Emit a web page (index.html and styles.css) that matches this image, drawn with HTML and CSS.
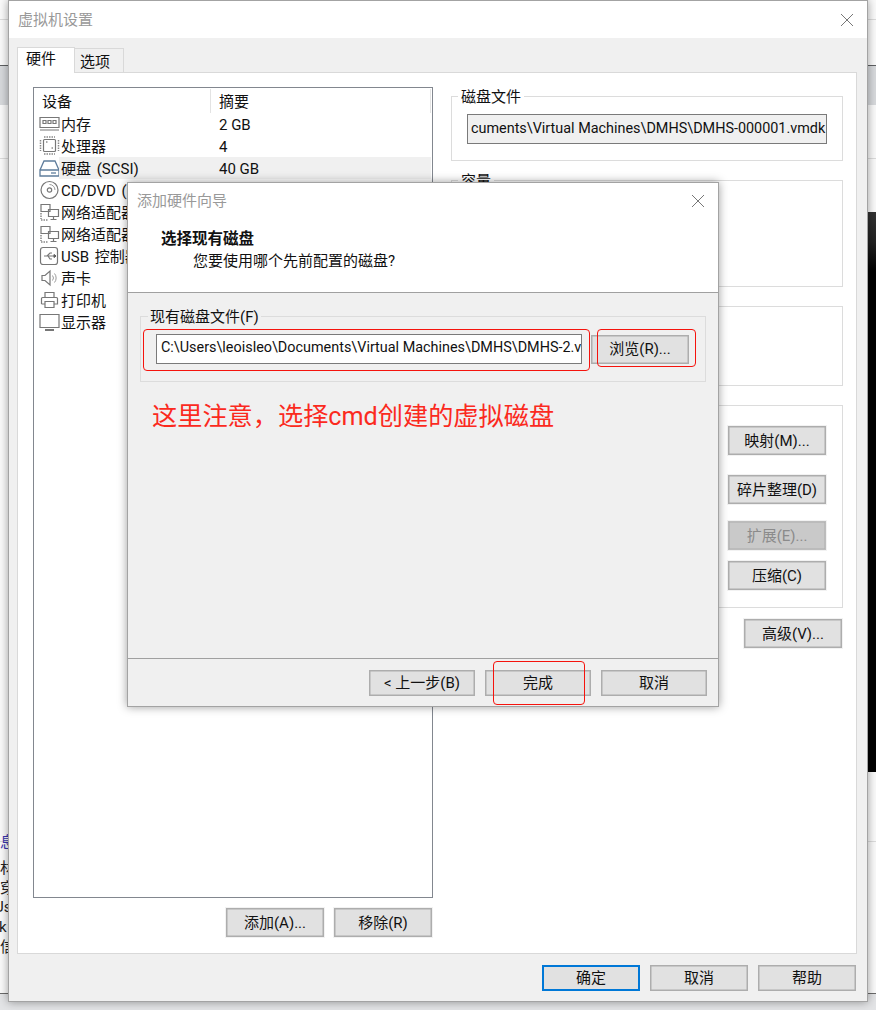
FILE: index.html
```html
<!DOCTYPE html>
<html lang="zh-CN">
<head>
<meta charset="utf-8">
<title>虚拟机设置</title>
<link rel="stylesheet" href="styles.css">
</head>
<body>
<div class="desktop">
  <div class="backdrop">
    <div class="band band-a"></div>
    <div class="band band-dark"></div>
    <div class="band band-gray"></div>
    <div class="band band-b"></div>
    <div class="band band-c"></div>
    <div class="band band-d"></div>
    <div class="band band-floor"></div>
  </div>
  <div class="side-dark"></div>
  <div class="side-line"></div>
  <div class="side-notes">
    <span class="note note-link">息</span>
    <span class="note">材</span>
    <span class="note">穿</span>
    <span class="note note-us">Us</span>
    <span class="note note-us">rk</span>
    <span class="note">信</span>
  </div>

  <section class="window">
    <header class="titlebar">
      <span class="title">虚拟机设置</span>
      <svg class="close" viewBox="0 0 14 14"><path d="M1 1l12 12M13 1L1 13"/></svg>
    </header>
    <div class="window-body">
      <nav class="tabs">
        <span class="tab tab-active">硬件</span>
        <span class="tab">选项</span>
      </nav>
      <div class="panel">
        <div class="col-left">
          <div class="list">
            <div class="list-head">
              <span class="head-cell">设备</span>
              <span class="head-cell head-last">摘要</span>
            </div>
            <div class="row">
              <svg class="ico" viewBox="0 0 21 20"><path class="s" d="M1 3.500h19v10H1zM1 16h19"/><path class="s" d="M4 6.500h3v3H4zM9 6.500h3v3H9zM14 6.500h3v3h-3z"/></svg>
              <span class="name">内存</span><span class="val">2 GB</span>
            </div>
            <div class="row">
              <svg class="ico" viewBox="0 0 21 20"><rect class="s" x="4.500" y="3.500" width="12" height="12" rx="1"/><path class="dot" d="M5 1h11M5 18h11M1.500 4v11M19.500 4v11"/><path class="k" d="M7 6h1.500M12.500 12h1.500"/></svg>
              <span class="name">处理器</span><span class="val">4</span>
            </div>
            <div class="row row-on">
              <svg class="ico" viewBox="0 0 21 20"><path class="b" d="M1 12L5 3h11l4 9M1 12h19v6H1z"/><path class="b" d="M12 15h5"/></svg>
              <span class="name">硬盘 (SCSI)</span><span class="val">40 GB</span>
            </div>
            <div class="row">
              <svg class="ico" viewBox="0 0 21 20"><circle class="s" cx="10.500" cy="10" r="8.500"/><circle class="s" cx="10.500" cy="10" r="2.200"/><path class="l" d="M10.500 4.500A5.500 5.500 0 0 1 16 10"/></svg>
              <span class="name">CD/DVD (IDE)</span>
            </div>
            <div class="row">
              <svg class="ico" viewBox="0 0 21 20"><path class="s" d="M2 2.500h9v7H2zM9.500 7.500h10v7h-10zM14.500 14.500v3M11.500 17.500h6"/><path class="dot" d="M2 18h7M2 11v6"/></svg>
              <span class="name">网络适配器</span>
            </div>
            <div class="row">
              <svg class="ico" viewBox="0 0 21 20"><path class="s" d="M2 2.500h9v7H2zM9.500 7.500h10v7h-10zM14.500 14.500v3M11.500 17.500h6"/><path class="dot" d="M2 18h7M2 11v6"/></svg>
              <span class="name">网络适配器</span>
            </div>
            <div class="row">
              <svg class="ico" viewBox="0 0 21 20"><rect class="s" x="1.500" y="1.500" width="17" height="17" rx="2.500"/><path class="s" d="M5 10h10M8 10l3-3h2M9 10l2 3h2"/><path class="k" d="M15 8.500l2 1.500-2 1.500z"/></svg>
              <span class="name">USB 控制器</span>
            </div>
            <div class="row">
              <svg class="ico" viewBox="0 0 21 20"><path class="s" d="M3 7.500h3l5-4.500v14l-5-4.500H3z"/><path class="l" d="M13.500 7.500a4 4 0 0 1 0 5M15.500 5.500a7 7 0 0 1 0 9"/></svg>
              <span class="name">声卡</span>
            </div>
            <div class="row">
              <svg class="ico" viewBox="0 0 21 20"><path class="s" d="M6 7.500v-5h9v5M2.500 14V8.500a1 1 0 0 1 1-1h14a1 1 0 0 1 1 1V14H15M6 14H2.500M6 11.500h9v6H6z"/></svg>
              <span class="name">打印机</span>
            </div>
            <div class="row">
              <svg class="ico" viewBox="0 0 21 20"><path class="s" d="M1 2.500h19v13H1z"/><path class="t" d="M6 18h9"/></svg>
              <span class="name">显示器</span>
            </div>
          </div>
          <div class="btn-row">
            <button class="btn btn-tall">添加(A)...</button>
            <button class="btn btn-tall">移除(R)</button>
          </div>
        </div>
        <div class="col-right">
          <div class="group group-file">
            <span class="legend">磁盘文件</span>
            <div class="field field-ro">cuments\Virtual Machines\DMHS\DMHS-000001.vmdk</div>
          </div>
          <div class="group group-size">
            <span class="legend">容量</span>
          </div>
          <div class="group group-mode"></div>
          <div class="group group-tools">
            <button class="btn btn-tall">映射(M)...</button>
            <button class="btn btn-tall gap-20">碎片整理(D)</button>
            <button class="btn btn-tall btn-off gap-17" disabled>扩展(E)...</button>
            <button class="btn btn-tall gap-11">压缩(C)</button>
          </div>
          <button class="btn btn-tall btn-adv">高级(V)...</button>
        </div>
      </div>
      <footer class="window-foot">
        <button class="btn btn-main">确定</button>
        <button class="btn">取消</button>
        <button class="btn">帮助</button>
      </footer>
    </div>
  </section>

  <section class="dialog">
    <header class="dialog-head">
      <div class="titlebar dialog-bar">
        <span class="title">添加硬件向导</span>
        <svg class="close" viewBox="0 0 14 14"><path d="M1 1l12 12M13 1L1 13"/></svg>
      </div>
      <h2 class="heading">选择现有磁盘</h2>
      <p class="sub">您要使用哪个先前配置的磁盘?</p>
    </header>
    <div class="dialog-body">
      <div class="group group-pick">
        <span class="legend legend-gray">现有磁盘文件(F)</span>
        <div class="pick-row">
          <div class="field field-path">C:\Users\leoisleo\Documents\Virtual Machines\DMHS\DMHS-2.vmdk</div>
          <button class="btn btn-browse">浏览(R)...</button>
        </div>
      </div>
      <p class="note-red">这里注意，选择cmd创建的虚拟磁盘</p>
    </div>
    <footer class="dialog-foot">
      <button class="btn btn-wide">&lt; 上一步(B)</button>
      <button class="btn btn-wide">完成</button>
      <button class="btn btn-wide">取消</button>
    </footer>
  </section>

  <div class="mark mark-path"></div>
  <div class="mark mark-browse"></div>
  <div class="mark mark-finish"></div>
</div>
</body>
</html>
```
FILE: styles.css
```css
* { box-sizing: border-box; }
html, body { margin: 0; padding: 0; }
body {
  font-family: Roboto, "Noto Sans CJK SC", sans-serif;
  font-size: 15px;
  color: #111;
}
.desktop {
  position: relative;
  width: 876px;
  height: 1010px;
  overflow: hidden;
  background: #fff;
}

/* what shows around the window */
.backdrop { position: absolute; inset: 0; display: flex; flex-direction: column; }
.band { border-bottom: 1px solid #dcdcdc; background: #fbfbfb; }
.band-a { height: 20px; }
.band-dark { height: 46px; border-bottom: 1px solid #5e6062; }
.band-gray { height: 39px; background: #d8dadd; border-bottom: 0; }
.band-b { height: 54px; }
.band-c { height: 683px; }
.band-d { height: 152px; border-bottom: 1px solid #6a6a6a; }
.band-floor { flex: 1; background: #e3e4e6; border-bottom: 0; }
.side-dark {
  position: absolute; right: 0; top: 212px; width: 9px; height: 560px;
  background: linear-gradient(#333 0, #222 30px, #000 60px);
}
.side-line { position: absolute; right: 0; top: 841px; width: 9px; height: 1px; background: #ddd; }
.side-notes {
  position: absolute; left: 0; top: 832px; width: 9px; overflow: hidden;
  display: flex; flex-direction: column;
  line-height: 20px; font-size: 15px; white-space: nowrap;
}
.note { display: block; height: 19.800px; color: #222; }
.note-link { color: #3a35b0; margin-bottom: 6px; }
.note-us { margin-left: -6px; }

/* shared window parts */
.window, .dialog {
  position: absolute;
  border: 1px solid #a3a3a3;
  background: #f0f0f0;
  box-shadow: 0 0 9px rgba(0, 0, 0, .38);
  display: flex;
  flex-direction: column;
}
.window { left: 8px; top: 0; width: 860px; height: 1002px; }
.dialog { left: 127px; top: 182px; width: 592px; height: 525px; }
.titlebar {
  height: 37px;
  background: #fff;
  display: flex;
  align-items: center;
  justify-content: space-between;
  padding: 0 13px 0 9px;
}
.title { color: #999; font-size: 15px; line-height: 20px; }
.close { width: 14px; height: 14px; fill: none; stroke: #777; stroke-width: 1; }

.window-body { flex: 1; padding: 9px 10px 0 8px; display: flex; flex-direction: column; }
.tabs { display: flex; height: 25px; align-items: flex-end; }
.tab {
  width: 50px; height: 24px;
  margin-left: -1px;
  border: 1px solid #d9d9d9;
  border-bottom: 0;
  background: #f0f0f0;
  padding-left: 5px;
  line-height: 26px;
}
.tab-active {
  position: relative;
  width: 58px; height: 26px;
  margin: 0 0 -1px;
  background: #fff;
  padding-left: 8px;
  line-height: 22px;
}
.panel {
  height: 882px;
  background: #fff;
  border: 1px solid #d9d9d9;
  padding: 14px 13px 0 15px;
  display: grid;
  grid-template-columns: 400px 392px;
  column-gap: 18px;
}
.col-left { display: flex; flex-direction: column; }
.col-right { display: flex; flex-direction: column; align-items: stretch; padding-top: 9px; }

.list { height: 811px; border: 1px solid #82878f; background: #fff; }
.list-head { display: grid; grid-template-columns: 177px 1fr; height: 25px; }
.head-cell { padding-left: 8px; line-height: 26px; height: 24px; border-right: 1px solid #e3e3e3; margin-top: 1px; }
.head-last { margin-right: 1px; }
.row { display: grid; grid-template-columns: 25px 160px 1fr; height: 22px; align-items: stretch; line-height: 24px; margin-right: 1px; }
.ico { width: 21px; height: 20px; margin: 1px 0 0 5px; fill: none; }
.s { stroke: #777; stroke-width: 1.200; fill: none; }
.t { stroke: #777; stroke-width: 2; fill: none; }
.b { stroke: #5f7d9c; stroke-width: 1.300; fill: none; }
.l { stroke: #9a9a9a; stroke-width: 1; fill: none; }
.k { stroke: #555; stroke-width: 1; fill: #777; }
.dot { stroke: #888; stroke-width: 1.500; stroke-dasharray: 1.500 1; fill: none; }
.name { padding-left: 2px; white-space: nowrap; word-spacing: 2px; height: 22px; }
.val { padding-left: 0; height: 22px; }
.row-on .name, .row-on .val { background: #f0f0f0; }

.btn {
  width: 98px; height: 26px; padding: 0;
  font: inherit; color: #111;
  background: #e1e1e1;
  border: 1px solid #adadad;
  box-shadow: inset 0 0 0 .5px #adadad;
  line-height: 22px;
  flex: none;
}
.btn-tall { height: 29px; box-shadow: inset 0 0 0 .5px #adadad, 0 0 0 1px #f2f2f2; }
.btn-main { border: 2px solid #0078d7; box-shadow: none; }
.btn-off { background: #c9c9c9; color: #8b8b8b; border-color: #bcbcbc; }
.btn-wide { width: 106px; }
.btn-row { display: flex; justify-content: flex-end; gap: 10px; margin: 10px 1px 0 0; }
.btn-adv { align-self: flex-end; margin: 11px 1px 0 0; }
.window-foot { display: flex; justify-content: flex-end; gap: 10px; padding: 11px 1px 0 0; }

.group { border: 1px solid #dcdcdc; display: flex; flex-direction: column; flex: none; }
.legend {
  align-self: flex-start;
  margin: -10px 0 0 6px;
  padding: 0 3px;
  line-height: 20px;
  background: #fff;
}
.legend-gray { background: #f0f0f0; margin: -10px 0 0 7px; padding: 0 2px; }
.group-file { height: 65px; }
.group-size { height: 107px; margin-top: 19px; }
.group-mode { height: 80px; margin-top: 19px; }
.group-tools { height: 203px; margin-top: 19px; padding: 20px 16px 0 0; align-items: flex-end; }
.gap-20 { margin-top: 20px; }
.gap-17 { margin-top: 17px; }
.gap-11 { margin-top: 11px; }

.field {
  height: 30px; overflow: hidden; white-space: nowrap;
  border: 1px solid #7a7a7a; background: #fff;
  font-size: 14.400px;
  line-height: 26px; padding-left: 3px;
}
.field-ro { margin: 7px 0 0 15px; background: #f0f0f0; width: 360px; line-height: 27px; }
.field-path { width: 426px; padding-left: 4px; }

.dialog-head { height: 110px; background: #fff; border-bottom: 1px solid #a0a0a0; flex: none; }
.dialog-bar { height: 36px; }
.heading { margin: 9px 0 0 33px; font-size: 15.500px; font-weight: 700; line-height: 22px; }
.sub { margin: 0 0 0 65px; line-height: 22px; }
.dialog-body { flex: 1; padding: 23px 12px 0 12px; border-bottom: 1px solid #a0a0a0; }
.group-pick { height: 66px; }
.pick-row { display: flex; margin: 7px 0 0 15px; align-items: flex-start; gap: 9px; }
.btn-browse { height: 29px; margin-top: 1px; padding-bottom: 2px; }
.note-red { margin: 18px 0 0 12px; font-size: 25.200px; line-height: 34px; color: #fb2a1e; white-space: nowrap; }
.dialog-foot { height: 47px; display: flex; justify-content: flex-end; gap: 10px; padding: 11px 11px 0 0; flex: none; }

/* red hand-drawn annotations */
.mark { position: absolute; border: 1px solid #f5130d; border-radius: 4px; }
.mark-path { left: 143px; top: 329px; width: 447px; height: 42px; }
.mark-browse { left: 597px; top: 329px; width: 99px; height: 38px; }
.mark-finish { left: 493px; top: 661px; width: 92px; height: 44px; }
```
